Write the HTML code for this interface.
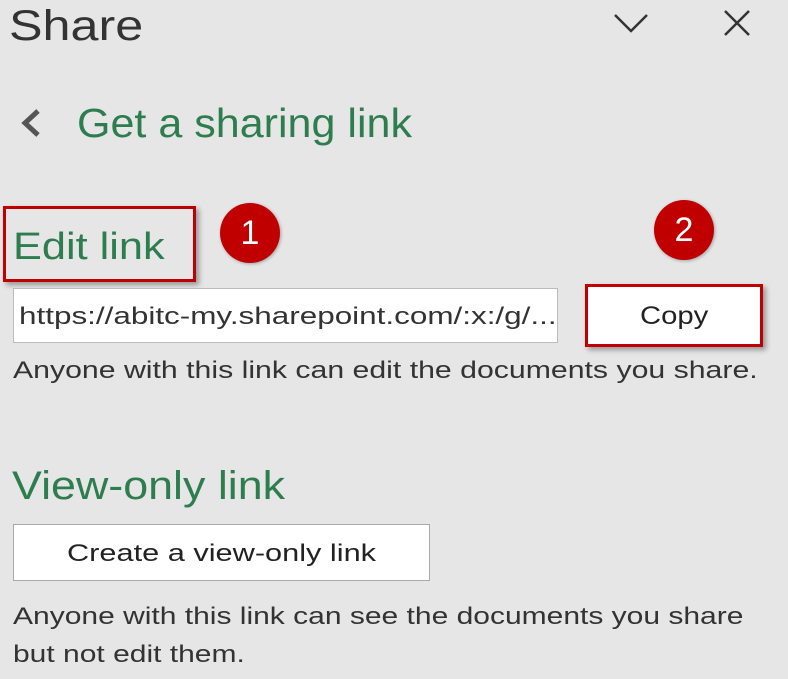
<!DOCTYPE html>
<html><head><meta charset="utf-8"><style>
body{margin:0;width:788px;height:679px;background:#e6e6e6;font-family:"Liberation Sans",sans-serif;position:relative;overflow:hidden;color:#262626}
.a{position:absolute;white-space:nowrap;transform-origin:0 0}
.g{color:#2e7d4f}
.circ{position:absolute;width:60px;height:60px;border-radius:50%;background:#c00000;color:#fff;font-size:34px;text-align:center;line-height:60px;box-shadow:1px 1px 3px rgba(0,0,0,.3)}
.box{position:absolute;border:3px solid #c00000;box-shadow:3px 3px 5px rgba(0,0,0,.35)}
</style></head><body>
<div class="a" style="left:9px;top:2px;font-size:43px;color:#333;transform:scaleX(1.17)">Share</div>
<svg class="a" style="left:612px;top:12px" width="40" height="24"><path d="M3 3 L19 19 L35 3" stroke="#333" stroke-width="2.5" fill="none"/></svg>
<svg class="a" style="left:722px;top:8px" width="32" height="30"><path d="M3 3 L27 27 M27 3 L3 27" stroke="#333" stroke-width="2.5" fill="none"/></svg>
<svg class="a" style="left:18px;top:108px" width="28" height="30"><path d="M20 3 L7 15 L20 27" stroke="#555" stroke-width="5" fill="none"/></svg>
<div class="a g" style="left:77px;top:100px;font-size:41px;transform:scaleX(1.05)">Get a sharing link</div>
<div class="box" style="left:3px;top:206px;width:187px;height:70px"></div>
<div class="a g" style="left:13px;top:226px;font-size:38px;transform:scaleX(1.14)">Edit link</div>
<div class="circ" style="left:220px;top:203px">1</div>
<div class="circ" style="left:654px;top:200px">2</div>
<div class="a" style="left:13px;top:288px;width:545px;height:55px;background:#fff;border:1px solid #bbb;box-sizing:border-box"></div>
<div class="a" style="left:19px;top:303px;font-size:24px;color:#333;transform:scaleX(1.31)">https://abitc-my.sharepoint.com/:x:/g/...</div>
<div class="box" style="left:585px;top:284px;width:172px;height:57px;background:#fff"></div>
<div class="a" style="left:640px;top:302px;font-size:25px;color:#222;transform:scaleX(1.17)">Copy</div>
<div class="a" style="left:13px;top:357px;font-size:24px;color:#333;transform:scaleX(1.26)">Anyone with this link can edit the documents you share.</div>
<div class="a g" style="left:12px;top:464px;font-size:40px;transform:scaleX(1.12)">View-only link</div>
<div class="a" style="left:13px;top:524px;width:417px;height:57px;background:#fff;border:1px solid #aaa;box-sizing:border-box"></div>
<div class="a" style="left:67px;top:540px;font-size:24px;color:#222;transform:scaleX(1.28)">Create a view-only link</div>
<div class="a" style="left:13px;top:598px;font-size:24px;color:#333;line-height:38px;transform:scaleX(1.25)">Anyone with this link can see the documents you share<br>but not edit them.</div>
</body></html>
